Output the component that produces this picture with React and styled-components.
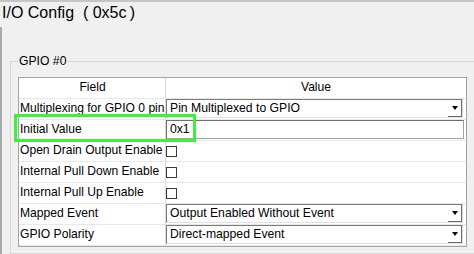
import { Fragment } from "react";
import styled, { createGlobalStyle } from "styled-components";

const Global = createGlobalStyle`
  body {
    margin: 0;
    background: #f0f0f0;
    font-family: "Liberation Sans", Arial, sans-serif;
    color: #000;
  }
`;

const Page = styled.div`
  width: 474px;
  height: 254px;
  overflow: hidden;
  display: flex;
  flex-direction: column;
`;

const Title = styled.div`
  height: 27px;
  box-sizing: border-box;
  border-top: 2px solid #c6c6c6;
  padding: 2px 0 0 2px;
  font-size: 16px;
  line-height: 18px;
  white-space: nowrap;
`;

const Body = styled.div`
  flex: 1;
  border-left: 2px solid #a9a9a9;
  padding: 27px 0 0 8px;
`;

const GroupBox = styled.fieldset`
  margin: 0;
  width: 480px;
  box-sizing: border-box;
  border: 1px solid #d9d9d9;
  padding: 8px 0 6px 7px;

  legend {
    padding: 0 1px;
    font-size: 12.2px;
    line-height: 15px;
  }
`;

const Grid = styled.div`
  position: relative;
  width: 449px;
  box-sizing: border-box;
  border: 1px solid #a3a3a3;
  background: #fff;
  display: grid;
  grid-template-columns: 147px 1fr;
  grid-auto-rows: 21px;
`;

const Cell = styled.div`
  box-sizing: border-box;
  border-bottom: 1px solid #e8e8e8;
  border-right: ${(p) => (p.$field ? "1px solid #dadada" : "none")};
  padding-left: ${(p) => (p.$field ? "1px" : "0")};
  font-size: 12.1px;
  line-height: 19px;
  text-align: ${(p) => (p.$center ? "center" : "left")};
  white-space: nowrap;
  overflow: hidden;
`;

const Select = styled.div`
  height: 19px;
  margin-right: 3px;
  box-sizing: border-box;
  border: 1px solid;
  border-color: #7b7b7b #e0e0e0 #e0e0e0 #7b7b7b;
  display: flex;
  align-items: center;
  padding-left: 3px;
  font-size: 12.2px;
  background: #fff;
`;

const Arrow = styled.span`
  margin-left: auto;
  width: 14px;
  height: 17px;
  box-sizing: border-box;
  border-right: 1px solid #6a6a6a;
  border-bottom: 1px solid #6a6a6a;
  display: flex;
  align-items: center;
  justify-content: center;

  &::after {
    content: "";
    border-left: 3px solid transparent;
    border-right: 3px solid transparent;
    border-top: 4px solid #000;
  }
`;

const TextBox = styled.div`
  height: 19px;
  margin-right: 2px;
  box-sizing: border-box;
  border: 1px solid;
  border-color: #6f6f6f #a0a0a0 #a0a0a0 #6f6f6f;
  padding-left: 3px;
  font-size: 12.2px;
  line-height: 17px;
`;

const Check = styled.span`
  display: block;
  width: 11px;
  height: 11px;
  margin-top: 5px;
  box-sizing: border-box;
  border: 1px solid #3a3a3a;
  background: #fff;
`;

const Highlight = styled.div`
  position: absolute;
  left: -5px;
  top: 36px;
  width: 182px;
  height: 28px;
  box-sizing: border-box;
  border: 3px solid #3cf03c;
  pointer-events: none;
`;

const rows = [
  { field: "Multiplexing for GPIO 0 pin", kind: "select", value: "Pin Multiplexed to GPIO" },
  { field: "Initial Value", kind: "text", value: "0x1" },
  { field: "Open Drain Output Enable", kind: "check" },
  { field: "Internal Pull Down Enable", kind: "check" },
  { field: "Internal Pull Up Enable", kind: "check" },
  { field: "Mapped Event", kind: "select", value: "Output Enabled Without Event" },
  { field: "GPIO Polarity", kind: "select", value: "Direct-mapped Event" },
];

const renderValue = (row) => {
  if (row.kind === "select") {
    return (
      <Select>
        {row.value}
        <Arrow />
      </Select>
    );
  }
  if (row.kind === "text") return <TextBox>{row.value}</TextBox>;
  return <Check />;
};

export default function App() {
  return (
    <Page>
      <Global />
      <Title>I/O Config{"\u00a0 ( 0x5c\u2009)"}</Title>
      <Body>
        <GroupBox>
          <legend>GPIO #0</legend>
          <Grid>
            <Cell $field $center>
              Field
            </Cell>
            <Cell $center>Value</Cell>
            {rows.map((row) => (
              <Fragment key={row.field}>
                <Cell $field>{row.field}</Cell>
                <Cell>{renderValue(row)}</Cell>
              </Fragment>
            ))}
            <Highlight />
          </Grid>
        </GroupBox>
      </Body>
    </Page>
  );
}
